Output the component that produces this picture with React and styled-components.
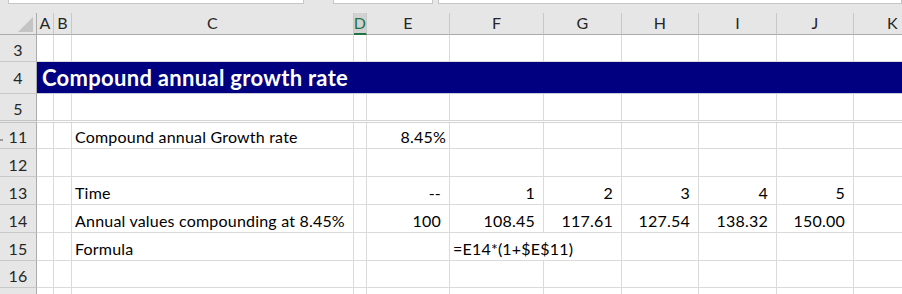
import React from "react";
import styled, { createGlobalStyle, css } from "styled-components";

const GlobalStyle = createGlobalStyle`
  html, body { margin: 0; padding: 0; background: #ffffff; overflow: hidden; }
  * { box-sizing: border-box; }
`;

const COLS = "37px 17px 18px 282px 13px 83px 94px 78px 77px 78px 77px 78px";
const FONT = `"Lato", "Liberation Sans", sans-serif`;

const Sheet = styled.div`
  width: 902px;
  height: 294px;
  overflow: hidden;
  display: flex;
  flex-direction: column;
  font-family: ${FONT};
  background: #ffffff;
`;

const TopBar = styled.div`
  height: 13px;
  flex: none;
  background: #e6e6e6;
  display: flex;
  align-items: flex-start;
  padding-left: 8px;
  gap: 29px;
`;

const FieldBox = styled.div`
  height: 4px;
  width: ${(p) => (p.$w ? `${p.$w}px` : "auto")};
  flex: ${(p) => (p.$w ? "none" : "1")};
  margin-left: ${(p) => p.$ml || 0}px;
  background: #ffffff;
  border: 1px solid #c6c6c6;
  border-top: none;
`;

const Row = styled.div`
  display: grid;
  grid-template-columns: ${COLS};
  height: ${(p) => p.$h}px;
  flex: none;
`;

const CornerCell = styled.div`
  background: #e6e6e6;
  border-right: 1px solid #ababab;
  border-bottom: 1px solid #ababab;
  display: flex;
  align-items: flex-end;
  justify-content: flex-end;
  padding: 0 3px 2px 0;
`;

const ColHead = styled.div`
  background: ${(p) => (p.$active ? "#d2d2d2" : "#e6e6e6")};
  border-right: 1px solid #c8c8c8;
  border-bottom: ${(p) => (p.$active ? "2px solid #217346" : "1px solid #ababab")};
  color: ${(p) => (p.$active ? "#217346" : "#262626")};
  font-size: 16px;
  letter-spacing: 0.2px;
  display: flex;
  align-items: flex-end;
  justify-content: center;
  padding-bottom: ${(p) => (p.$active ? 1 : 2)}px;
  line-height: 19px;
`;

const RowHead = styled.div`
  position: relative;
  background: #e6e6e6;
  border-right: 1px solid #ababab;
  border-bottom: ${(p) => (p.$gap ? "3px double #c4c4c4" : "1px solid #c8c8c8")};
  color: #262626;
  font-size: 16px;
  letter-spacing: 0.2px;
  line-height: 19px;
  display: flex;
  align-items: ${(p) => (p.$center ? "center" : "flex-end")};
  justify-content: center;
  padding-bottom: ${(p) => (p.$center ? 0 : 2)}px;
  ${(p) =>
    p.$mark &&
    css`
      &::before {
        content: "";
        position: absolute;
        left: 0;
        top: 16px;
        width: 3px;
        height: 2px;
        background: #9a9a9a;
      }
    `}
`;

const Cell = styled.div`
  border-right: 1px solid #dadada;
  border-bottom: ${(p) => (p.$gap ? "3px double #d4d4d4" : "1px solid #dadada")};
  grid-column: ${(p) => (p.$span ? `span ${p.$span}` : "auto")};
  color: #000000;
  font-size: 16px;
  letter-spacing: 0.2px;
  line-height: 19px;
  white-space: nowrap;
  display: flex;
  align-items: flex-end;
  justify-content: ${(p) => (p.$right ? "flex-end" : "flex-start")};
  padding: 0 ${(p) => (p.$right ? p.$pad ?? 8 : 0)}px 2px
    ${(p) => (p.$right ? 0 : p.$pad ?? 3)}px;
`;

const TitleBand = styled.div`
  grid-column: 2 / -1;
  background: #000080;
  color: #ffffff;
  font-weight: 700;
  font-size: 22px;
  letter-spacing: 0.3px;
  line-height: 26px;
  white-space: nowrap;
  display: flex;
  align-items: center;
  padding-left: 5px;
  padding-top: 1px;
  border-bottom: 1px solid #c8c8d8;
`;

const COL_LETTERS = ["A", "B", "C", "D", "E", "F", "G", "H", "I", "J", "K"];

const SelectAll = () => (
  <svg width="15" height="15" viewBox="0 0 15 15">
    <polygon points="15,0 15,15 0,15" fill="#c4c4c4" />
  </svg>
);

const blankCells = (n, gapRow) =>
  Array.from({ length: n }, (_, i) => <Cell key={`b${i}`} $gap={gapRow} />);

const DataRow = ({ num, h, gap, mark, children }) => (
  <Row $h={h}>
    <RowHead $gap={gap} $mark={mark}>{num}</RowHead>
    {children}
  </Row>
);

export default function App() {
  return (
    <>
      <GlobalStyle />
      <Sheet>
        <TopBar>
          <FieldBox $w={296} />
          <FieldBox $w={100} />
          <FieldBox $ml={-24} />
        </TopBar>

        <Row $h={22}>
          <CornerCell>
            <SelectAll />
          </CornerCell>
          {COL_LETTERS.map((l) => (
            <ColHead key={l} $active={l === "D"}>
              {l}
            </ColHead>
          ))}
        </Row>

        <DataRow num="3" h={27}>{blankCells(11)}</DataRow>

        <Row $h={32}>
          <RowHead $center>4</RowHead>
          <TitleBand>Compound annual growth rate</TitleBand>
        </Row>

        <DataRow num="5" h={29} gap>{blankCells(11, true)}</DataRow>

        <DataRow num="11" h={26} mark>
          <Cell />
          <Cell />
          <Cell>Compound annual Growth rate</Cell>
          <Cell />
          <Cell $right $pad={3}>8.45%</Cell>
          {blankCells(6)}
        </DataRow>

        <DataRow num="12" h={28}>{blankCells(11)}</DataRow>

        <DataRow num="13" h={28}>
          <Cell />
          <Cell />
          <Cell>Time</Cell>
          <Cell />
          <Cell $right>--</Cell>
          <Cell $right>1</Cell>
          <Cell $right>2</Cell>
          <Cell $right>3</Cell>
          <Cell $right>4</Cell>
          <Cell $right>5</Cell>
          <Cell />
        </DataRow>

        <DataRow num="14" h={28}>
          <Cell />
          <Cell />
          <Cell>Annual values compounding at 8.45%</Cell>
          <Cell />
          <Cell $right>100</Cell>
          <Cell $right>108.45</Cell>
          <Cell $right>117.61</Cell>
          <Cell $right>127.54</Cell>
          <Cell $right>138.32</Cell>
          <Cell $right>150.00</Cell>
          <Cell />
        </DataRow>

        <DataRow num="15" h={28}>
          <Cell />
          <Cell />
          <Cell>Formula</Cell>
          <Cell />
          <Cell />
          <Cell $span={2}>=E14*(1+$E$11)</Cell>
          {blankCells(4)}
        </DataRow>

        <DataRow num="16" h={27}>{blankCells(11)}</DataRow>
        <DataRow h={28}>{blankCells(11)}</DataRow>
      </Sheet>
    </>
  );
}
